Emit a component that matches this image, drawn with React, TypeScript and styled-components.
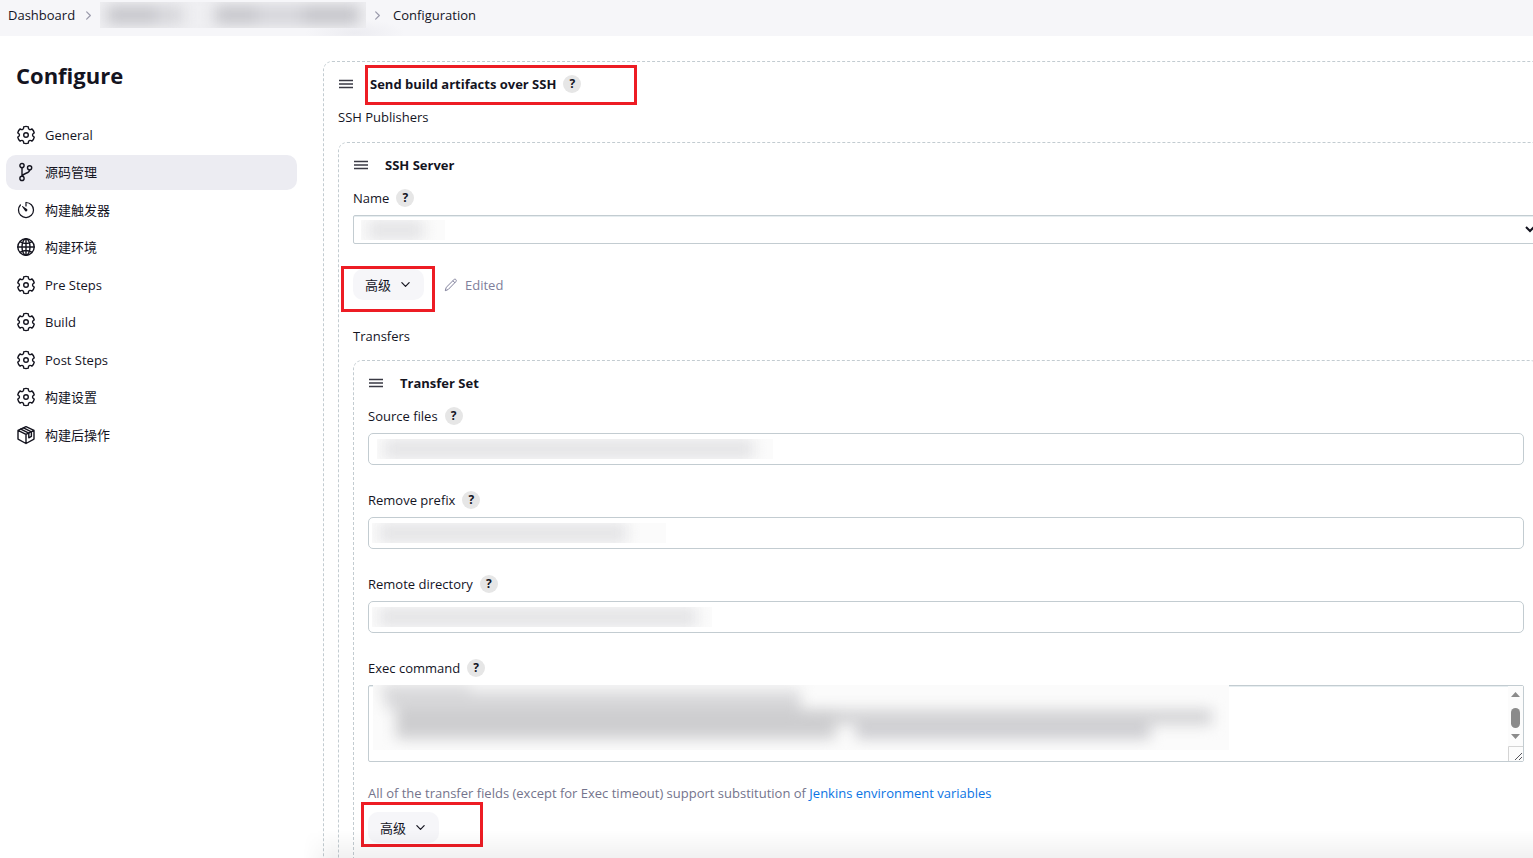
import React from 'react';
import styled, { createGlobalStyle } from 'styled-components';
import { IoTimerOutline, IoChevronDown, IoChevronForward } from 'react-icons/io5';

const Global = createGlobalStyle`
  *, *::before, *::after { box-sizing: border-box; }
  body {
    margin: 0;
    background: #fff;
    color: #14141f;
    font: 13px/20px "Open Sans", "Noto Sans CJK SC", sans-serif;
  }
  button, input, select, textarea { font: inherit; color: inherit; }
`;

const Page = styled.div`
  position: relative;
  height: 100vh;
  overflow: hidden;
`;

const Header = styled.header`
  height: 36px;
  padding: 2px 8px 8px;
  background: radial-gradient(ellipse 50px 14px at 355px 33px, #ececf1, #f6f6f9);
`;

const Crumbs = styled.nav`
  display: flex;
  align-items: center;
  gap: 5px;
  height: 26px;
  a { color: inherit; text-decoration: none; }
  a:first-child { margin-right: 2px; }
  a:last-child { margin-left: 4px; }
`;

const CrumbArrow = styled(IoChevronForward)`
  flex: none;
  width: 13px;
  height: 13px;
  color: #9a9aab;
`;

const Columns = styled.div`
  display: grid;
  grid-template-columns: 297px minmax(0, 1fr);
  gap: 26px;
`;

const Sidebar = styled.aside`
  padding: 23px 0 0 6px;
`;

const Heading = styled.h1`
  margin: 0 10px 26px;
  font-size: 22px;
  line-height: 32px;
  font-weight: 700;
`;

const Menu = styled.nav`
  display: flex;
  flex-direction: column;
  justify-content: space-between;
  min-height: 335px;
`;

const MenuItem = styled.a<{ $active?: boolean }>`
  display: flex;
  align-items: center;
  gap: 9px;
  height: 35px;
  padding: 0 10px;
  border-radius: 10px;
  background: ${(p) => (p.$active ? '#ececf2' : 'transparent')};
  color: inherit;
  text-decoration: none;
  svg { width: 20px; height: 20px; flex: none; }
`;

const Main = styled.main`
  margin-right: -36px;
  padding-top: 25px;
`;

const Panel = styled.section`
  padding: 11px 14px 30px;
  border: 1px dashed #c3ccd1;
  border-radius: 9px;
`;

const PanelHead = styled.div`
  position: relative;
  display: flex;
  align-items: center;
  gap: 17px;
  height: 22px;
  padding-left: 1px;
  margin-bottom: 12px;
`;

const Title = styled.h2`
  margin: 0;
  font-size: 13px;
  line-height: 20px;
  font-weight: 700;
`;

const TitleGroup = styled.div`
  display: flex;
  align-items: center;
  gap: 7px;
`;

const Caption = styled.div`
  margin-bottom: 15px;
`;

const TransfersCaption = styled.div`
  margin: 26px 0 14px;
`;

const LabelRow = styled.div`
  display: flex;
  align-items: center;
  gap: 7px;
  height: 20px;
  margin-bottom: 7px;
`;

const HelpButton = styled.button`
  width: 18px;
  height: 18px;
  padding: 0;
  border: 0;
  border-radius: 50%;
  background: #e6e6e6;
  font-size: 12px;
  line-height: 18px;
  font-weight: 700;
`;

/* The control, its obscured value and its scroll bar share one grid cell. */
const Field = styled.div`
  display: grid;
  margin-bottom: 25px;
  & > * { grid-area: 1 / 1; }
`;

const TextInput = styled.input`
  width: 100%;
  height: 32px;
  padding: 0 8px;
  border: 1px solid #c3ccd1;
  border-radius: 5px;
  background: #fff;
`;

const Select = styled.select`
  width: 100%;
  height: 29px;
  padding: 0 4px;
  border: 1px solid #c3ccd1;
  border-radius: 2px;
  background: #fff;
  box-shadow: inset 0 1px 0 #e6edf0;
`;

const TextArea = styled.textarea`
  width: 100%;
  height: 77px;
  border: 1px solid #c3ccd1;
  border-radius: 2px;
  box-shadow: inset 0 1px 0 #e6edf0;
  resize: none;
  overflow: hidden;
`;

const ScrollTrack = styled.svg`
  justify-self: end;
  margin: 1px;
`;

const Redaction = styled.span<{ $w: number; $h?: number; $inset?: number }>`
  z-index: 1;
  display: flex;
  align-items: center;
  align-self: center;
  width: ${(p) => p.$w}px;
  height: ${(p) => p.$h ?? 20}px;
  margin-left: ${(p) => p.$inset ?? 4}px;
  padding: 0 7px;
  overflow: hidden;
  background: #fbfbfb;
  pointer-events: none;
`;

const CrumbRedaction = styled(Redaction)`
  flex: none;
  margin: 0;
  background: #efeff2;
`;

const Smear = styled.span<{ $w: number; $h?: number; $tone?: string; $indent?: number }>`
  flex: none;
  width: ${(p) => p.$w}px;
  height: ${(p) => p.$h ?? 20}px;
  margin-left: ${(p) => p.$indent ?? 0}px;
  background: ${(p) => p.$tone ?? '#e4e4e6'};
`;

/* Blurs all of its smears together, so that neighbours run into each other. */
const Blurred = styled.span`
  display: flex;
  flex: none;
  filter: blur(7px);
`;

const BlurredLines = styled(Blurred)`
  flex-direction: column;
`;

const CommandRedaction = styled(Redaction)`
  align-items: flex-start;
  align-self: start;
`;

const SmearLine = styled.span`
  display: flex;
  flex: none;
`;

const ButtonRow = styled.div`
  position: relative;
  display: flex;
  align-items: center;
  gap: 20px;
  height: 31px;
`;

const AdvancedButton = styled.button`
  display: flex;
  align-items: center;
  gap: 8px;
  height: 31px;
  padding: 0 12px;
  border: 0;
  border-radius: 10px;
  background: #f6f6f9;
  svg { width: 13px; height: 13px; }
`;

const Edited = styled.span`
  display: flex;
  align-items: center;
  gap: 7px;
  color: #80809b;
`;

const Hint = styled.div`
  margin: -4px 0 9px;
  color: #74748c;
  a { color: #0b74e4; text-decoration: none; }
`;

const Mark = styled.span<{ $left: number; $top: number; $w: number; $h: number }>`
  position: absolute;
  left: ${(p) => p.$left}px;
  top: ${(p) => p.$top}px;
  width: ${(p) => p.$w}px;
  height: ${(p) => p.$h}px;
  border: 3px solid #ed1c24;
  pointer-events: none;
`;

const BottomShade = styled.div`
  position: absolute;
  left: 303px;
  right: 0;
  bottom: 0;
  height: 28px;
  background: linear-gradient(to bottom, rgba(0, 0, 0, 0), rgba(0, 0, 0, 0.055));
  mask-image: linear-gradient(to right, transparent, #000 30px);
  pointer-events: none;
`;

const Icon = ({ children }: { children: React.ReactNode }) => (
  <svg viewBox="0 0 20 20" fill="none" stroke="currentColor" strokeWidth="1.4" strokeLinejoin="round" strokeLinecap="round" aria-hidden="true">
    {children}
  </svg>
);

const polar = (r: number, deg: number) => {
  const a = (deg * Math.PI) / 180;
  return `${(10 + r * Math.cos(a)).toFixed(2)} ${(10 + r * Math.sin(a)).toFixed(2)}`;
};

/* Six rounded teeth, the first pointing up. */
const gearPath =
  `M${polar(8.5, -106)}` +
  [0, 1, 2, 3, 4, 5]
    .map((k) => {
      const c = k * 60 - 90;
      return `Q${polar(9, c)} ${polar(8.5, c + 16)}C${polar(6, c + 20)} ${polar(6, c + 40)} ${polar(8.5, c + 44)}`;
    })
    .join('') +
  'Z';

const GearIcon = () => (
  <Icon>
    <path d={gearPath} />
    <circle cx="10" cy="10" r="2.300" />
  </Icon>
);

const BranchIcon = () => (
  <Icon>
    <circle cx="6" cy="3.600" r="2.100" />
    <circle cx="6" cy="16.400" r="2.100" />
    <circle cx="13.600" cy="5.800" r="2.100" />
    <path d="M6 5.700v8.600M13.600 7.900c0 4-6.500 2.600-7.400 6.400" />
  </Icon>
);

const GlobeIcon = () => (
  <Icon>
    <circle cx="10" cy="10" r="8.200" />
    <ellipse cx="10" cy="10" rx="4" ry="8.200" />
    <path d="M10 1.800v16.400M1.800 10h16.400M4.300 4.800c3.400 2 8 2 11.400 0M4.300 15.200c3.400-2 8-2 11.400 0" />
  </Icon>
);

const PackageIcon = () => (
  <Icon>
    <path d="M10 1.600 18 5.400v8.700L10 18.500 2 14.100V5.400zM2 5.400l8 4 8-4M10 9.400v9.100" />
    <path d="M4.800 4.100l8 4M7.500 2.900l7.900 3.900M12.800 8.200v4.600l2.600-1.400V6.900" />
  </Icon>
);

const PencilIcon = () => (
  <svg width="14" height="14" viewBox="0 0 14 14" fill="none" stroke="currentColor" strokeWidth="1" strokeLinejoin="round" aria-hidden="true">
    <path d="M1.300 12.700l.9-3.300 7.600-7.600c.7-.7 1.500-.8 2.100-.2s.5 1.500-.2 2.200l-7.500 7.700zM8.900 2.700l2.200 2.200" />
  </svg>
);

const Grip = () => (
  <svg width="14" height="10" viewBox="0 0 14 10" aria-hidden="true">
    <path d="M0 1.500h14M0 5h14M0 8.500h14" stroke="#3a3a44" strokeWidth="1.400" />
  </svg>
);

const Help = ({ topic }: { topic: string }) => (
  <HelpButton type="button" aria-label={`Help for feature: ${topic}`}>?</HelpButton>
);

const Label = ({ id, text }: { id: string; text: string }) => (
  <LabelRow>
    <label htmlFor={id}>{text}</label>
    <Help topic={text} />
  </LabelRow>
);

const menu = [
  { text: 'General', icon: <GearIcon /> },
  { text: '源码管理', icon: <BranchIcon />, active: true },
  { text: '构建触发器', icon: <IoTimerOutline /> },
  { text: '构建环境', icon: <GlobeIcon /> },
  { text: 'Pre Steps', icon: <GearIcon /> },
  { text: 'Build', icon: <GearIcon /> },
  { text: 'Post Steps', icon: <GearIcon /> },
  { text: '构建设置', icon: <GearIcon /> },
  { text: '构建后操作', icon: <PackageIcon /> },
];

const textFields = [
  { id: 'source', label: 'Source files', inset: 9, width: 396, smear: 370 },
  { id: 'prefix', label: 'Remove prefix', inset: 4, width: 294, smear: 248 },
  { id: 'remote', label: 'Remote directory', inset: 4, width: 340, smear: 318 },
];

export default function App() {
  return (
    <>
      <Global />
      <Page>
        <Header>
          <Crumbs aria-label="Breadcrumb">
            <a href="#dashboard">Dashboard</a>
            <CrumbArrow />
            <CrumbRedaction $w={266} $h={26}>
              <Blurred>
                <Smear $w={50} $h={18} $tone="#c6c6cb" />
                <Smear $w={26} $h={18} $tone="#d6d6da" />
                <Smear $w={42} $h={18} $indent={32} $tone="#c6c6cb" />
                <Smear $w={46} $h={18} $tone="#d4d4d9" />
                <Smear $w={56} $h={18} $tone="#c4c4c9" />
              </Blurred>
            </CrumbRedaction>
            <CrumbArrow />
            <a href="#configuration">Configuration</a>
          </Crumbs>
        </Header>
        <Columns>
          <Sidebar>
            <Heading>Configure</Heading>
            <Menu aria-label="Configure">
              {menu.map((m) => (
                <MenuItem key={m.text} href="#section" $active={m.active}>
                  {m.icon}
                  {m.text}
                </MenuItem>
              ))}
            </Menu>
          </Sidebar>
          <Main>
            <Panel>
              <PanelHead>
                <Grip />
                <TitleGroup>
                  <Title>Send build artifacts over SSH</Title>
                  <Help topic="Send build artifacts over SSH" />
                </TitleGroup>
                <Mark $left={27} $top={-8} $w={272} $h={40} />
              </PanelHead>
              <Caption>SSH Publishers</Caption>
              <Panel>
                <PanelHead>
                  <Grip />
                  <Title>SSH Server</Title>
                </PanelHead>
                <Label id="server" text="Name" />
                <Field>
                  <Select id="server" />
                  <Redaction $w={84} $inset={8}>
                    <Blurred>
                      <Smear $w={56} />
                    </Blurred>
                  </Redaction>
                </Field>
                <ButtonRow>
                  <AdvancedButton type="button">高级 <IoChevronDown /></AdvancedButton>
                  <Edited><PencilIcon />Edited</Edited>
                  <Mark $left={-12} $top={-3} $w={94} $h={46} />
                </ButtonRow>
                <TransfersCaption>Transfers</TransfersCaption>
                <Panel>
                  <PanelHead>
                    <Grip />
                    <Title>Transfer Set</Title>
                  </PanelHead>
                  {textFields.map((f) => (
                    <React.Fragment key={f.id}>
                      <Label id={f.id} text={f.label} />
                      <Field>
                        <TextInput id={f.id} type="text" />
                        <Redaction $w={f.width} $inset={f.inset}>
                          <Blurred>
                            <Smear $w={f.smear} />
                          </Blurred>
                        </Redaction>
                      </Field>
                    </React.Fragment>
                  ))}
                  <Label id="exec" text="Exec command" />
                  <Field>
                    <TextArea id="exec" />
                    <CommandRedaction $w={856} $h={65} $inset={5}>
                      <BlurredLines>
                        <SmearLine>
                          <Smear $w={90} $h={8} $tone="#d8d8da" />
                          <Smear $w={330} $h={8} $tone="#efeff0" />
                        </SmearLine>
                        <SmearLine>
                          <Smear $w={416} $h={16} $indent={5} $tone="#d8d8da" />
                        </SmearLine>
                        <SmearLine>
                          <Smear $w={440} $h={16} $indent={16} $tone="#cdcdcf" />
                          <Smear $w={376} $h={16} $tone="#d4d4d6" />
                        </SmearLine>
                        <SmearLine>
                          <Smear $w={440} $h={14} $indent={16} $tone="#cfcfd1" />
                          <Smear $w={294} $h={14} $indent={20} $tone="#cdcdd1" />
                        </SmearLine>
                      </BlurredLines>
                    </CommandRedaction>
                    <ScrollTrack width="15" height="75" viewBox="0 0 15 75" aria-hidden="true">
                      <path d="M0 0h15v75H0z" fill="#fcfcfc" />
                      <path d="M3 11h9L7.500 6zM3 48h9L7.500 53z" fill="#8b8b8b" />
                      <rect x="3" y="22" width="9" height="20" rx="4.500" fill="#8b8b8b" />
                      <path d="M0.500 75V60.500H15" fill="none" stroke="#d4d4d4" />
                      <path d="M7 74l7-7M11 74l3-3" stroke="#55555c" />
                    </ScrollTrack>
                  </Field>
                  <Hint>
                    All of the transfer fields (except for Exec timeout) support substitution of{' '}
                    <a href="#env">Jenkins environment variables</a>
                  </Hint>
                  <ButtonRow>
                    <AdvancedButton type="button">高级 <IoChevronDown /></AdvancedButton>
                    <Mark $left={-7} $top={-10} $w={122} $h={45} />
                  </ButtonRow>
                </Panel>
              </Panel>
            </Panel>
          </Main>
        </Columns>
        <BottomShade />
      </Page>
    </>
  );
}
